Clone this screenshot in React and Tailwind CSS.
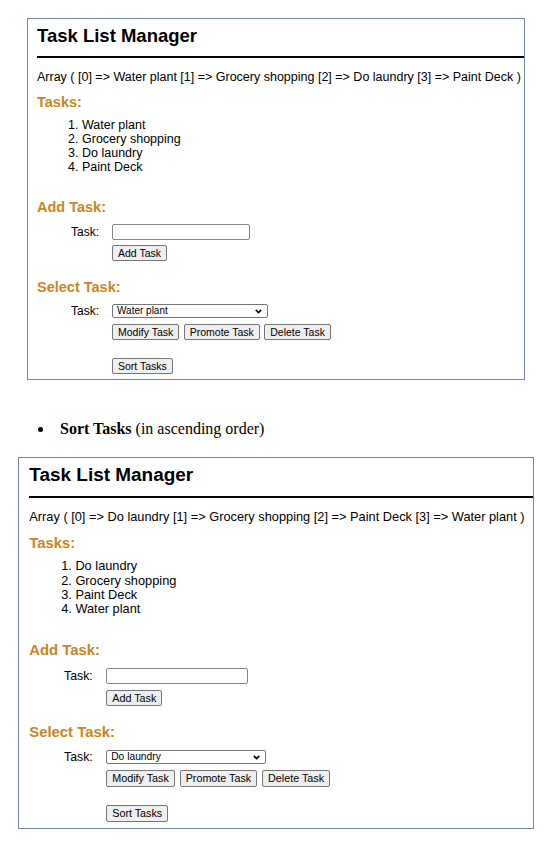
import React from "react";

function Btn({ children }) {
  return (
    <button className="block h-[16px] px-[5px] border border-[#767676] rounded-[2px] bg-[#efefef] text-[10.5px] leading-[14px] text-black font-['Liberation_Sans',Arial,sans-serif]">
      {children}
    </button>
  );
}

function Heading({ children, className }) {
  return (
    <h2 className={"text-[14.5px] leading-[17px] font-bold text-[#c98623] " + className}>
      {children}
    </h2>
  );
}

function Panel({ tasks, panelClass, padClass }) {
  const arr = "Array ( " + tasks.map((t, i) => "[" + i + "] => " + t).join(" ") + " )";
  return (
    <div className={panelClass}>
      <div className={padClass}>
        <h1 className="mt-[6px] pb-[9px] border-b-2 border-black text-[18.5px] leading-[22px] font-bold text-black">
          Task List Manager
        </h1>
        <p className="mt-[12px] text-[12.5px] leading-[14px] text-black whitespace-nowrap">{arr}</p>
        <Heading className="mt-[10px]">Tasks:</Heading>
        <ol className="mt-[7px] pl-[45px] list-decimal text-[12.5px] leading-[14px] text-black">
          {tasks.map((t) => (
            <li key={t}>{t}</li>
          ))}
        </ol>
        <Heading className="mt-[25px]">Add Task:</Heading>
        <div className="mt-[8px] ml-[34px] flex items-start">
          <div className="w-[41px] text-[12px] leading-[16px] text-black">Task:</div>
          <div className="flex flex-col items-start gap-[5px]">
            <input
              type="text"
              className="block w-[138px] h-[16px] border border-[#858585] rounded-[2px] bg-white outline-none"
            />
            <Btn>Add Task</Btn>
          </div>
        </div>
        <Heading className="mt-[18px]">Select Task:</Heading>
        <div className="mt-[8px] ml-[34px] flex items-start">
          <div className="w-[41px] -mt-[1px] text-[12px] leading-[16px] text-black">Task:</div>
          <div className="flex flex-col items-start">
            <div className="w-[156px] h-[14px] border border-[#767676] rounded-[2px] bg-white flex items-center justify-between pl-[4px] pr-[5px]">
              <span className="text-[10px] leading-[12px] text-black">{tasks[0]}</span>
              <svg width="7" height="5" viewBox="0 0 7 5" className="block">
                <path d="M0.8 0.9 L3.5 3.6 L6.2 0.9" fill="none" stroke="#000" strokeWidth="1.6" />
              </svg>
            </div>
            <div className="mt-[6px] flex gap-[4.5px]">
              <Btn>Modify Task</Btn>
              <Btn>Promote Task</Btn>
              <Btn>Delete Task</Btn>
            </div>
            <div className="mt-[18px] flex">
              <Btn>Sort Tasks</Btn>
            </div>
          </div>
        </div>
      </div>
    </div>
  );
}

export default function App() {
  const before = ["Water plant", "Grocery shopping", "Do laundry", "Paint Deck"];
  const after = ["Do laundry", "Grocery shopping", "Paint Deck", "Water plant"];
  return (
    <div className="w-[551px] h-[845px] bg-white overflow-hidden font-['Liberation_Sans',Arial,sans-serif] pt-[18px]">
      <Panel
        tasks={before}
        panelClass="ml-[27px] w-[498px] h-[362px] border border-[#7586a8] bg-white"
        padClass="pl-[9px]"
      />
      <div className="mt-[40px] flex items-center h-[18px] font-['Liberation_Serif','Times_New_Roman',serif] text-[16px] leading-[18px] text-black">
        <div className="ml-[38px] w-[5px] h-[5px] rounded-full bg-black"></div>
        <div className="ml-[17px]">
          <span className="font-bold">Sort Tasks</span> (in ascending order)
        </div>
      </div>
      <div className="mt-[19px] ml-[18px]">
        <Panel
          tasks={after}
          panelClass="w-[503px] h-[363px] border border-[#7586a8] bg-white [zoom:1.025]"
          padClass="pl-[10px]"
        />
      </div>
    </div>
  );
}
